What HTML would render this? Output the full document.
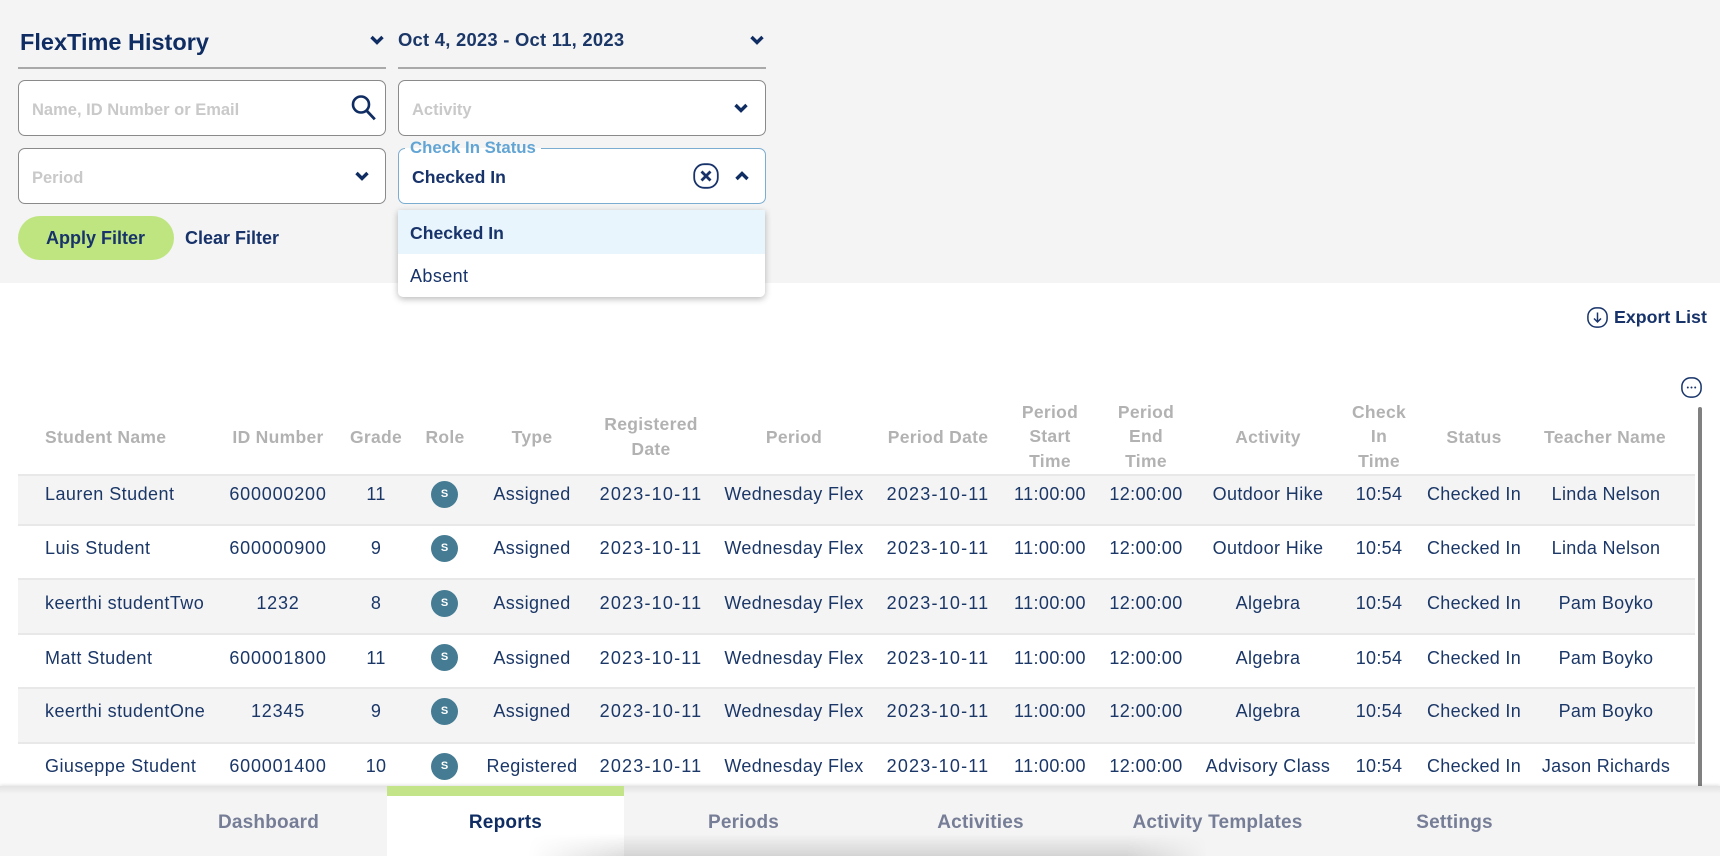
<!DOCTYPE html>
<html><head><meta charset="utf-8"><title>FlexTime History</title>
<style>
*{box-sizing:border-box}
html,body{margin:0;padding:0;width:1720px;height:856px;overflow:hidden;background:#fff;font-family:"Liberation Sans",sans-serif;color:#1b3767}
.a{position:absolute}
.t{position:absolute;white-space:nowrap;line-height:24px;height:24px}
.b{font-weight:bold}
.top{left:0;top:0;width:1720px;height:283px;background:#f4f4f4}
.line{height:2px;background:#a9a9a9;top:67px}
.box{background:#fff;border:1.5px solid #8a8a8a;border-radius:7px;height:56px;width:368.5px}
.ph{font-weight:bold;font-size:16.5px;color:#c9c9c9}
.row{position:absolute;left:17.5px;width:1677.5px;border-top:2px solid #e8e8e8}
.g{background:#f4f4f4}
.c{position:absolute;width:200px;text-align:center;white-space:nowrap;font-size:18px;letter-spacing:.3px;line-height:24px}
.n{text-align:left;letter-spacing:.45px}
.d{letter-spacing:1.2px}
.i{letter-spacing:.8px}
.m{letter-spacing:.4px}
.av{position:absolute;width:27px;height:27px;border-radius:50%;background:#457b93;color:#fff;font-size:11px;font-weight:bold;line-height:27px;text-align:center}
.h{position:absolute;width:200px;text-align:center;font-weight:bold;font-size:17.5px;letter-spacing:.3px;line-height:24.6px;color:#b2b2b2;white-space:nowrap}
.nav{position:absolute;top:811px;width:237px;text-align:center;font-weight:bold;font-size:19px;letter-spacing:.2px;line-height:24px;color:#767d96;white-space:nowrap}
</style></head><body>
<div class="a top"></div>

<div class="t b" style="left:20px;top:30px;font-size:23.5px;color:#0f2d62">FlexTime History</div>
<svg class="a" style="left:370px;top:35px" width="14" height="10" viewBox="0 0 14 10"><path d="M1.5 2l5.5 5.5L12.5 2" fill="none" stroke="#0f2d62" stroke-width="3.4"/></svg>
<div class="t b" style="left:398px;top:28px;font-size:18.4px;letter-spacing:.25px;color:#1b3767">Oct 4, 2023 - Oct 11, 2023</div>
<svg class="a" style="left:750px;top:35px" width="14" height="10" viewBox="0 0 14 10"><path d="M1.5 2l5.5 5.5L12.5 2" fill="none" stroke="#0f2d62" stroke-width="3.4"/></svg>
<div class="a line" style="left:17.5px;width:368.5px"></div>
<div class="a line" style="left:397.5px;width:368.5px"></div>

<div class="a box" style="left:17.5px;top:80px"></div>
<div class="t ph" style="left:32px;top:98px">Name, ID Number or Email</div>
<svg class="a" style="left:350px;top:94px" width="28" height="28" viewBox="0 0 28 28"><circle cx="11" cy="10.5" r="8" fill="none" stroke="#0f2d62" stroke-width="2.6"/><path d="M16.5 16.5l8.3 8.8" fill="none" stroke="#0f2d62" stroke-width="2.8"/></svg>

<div class="a box" style="left:397.5px;top:80px"></div>
<div class="t ph" style="left:412px;top:98px">Activity</div>
<svg class="a" style="left:734px;top:103px" width="14" height="10" viewBox="0 0 14 10"><path d="M1.5 2l5.5 5.5L12.5 2" fill="none" stroke="#0f2d62" stroke-width="3.4"/></svg>

<div class="a box" style="left:17.5px;top:148px"></div>
<div class="t ph" style="left:32px;top:166px">Period</div>
<svg class="a" style="left:355px;top:171px" width="14" height="10" viewBox="0 0 14 10"><path d="M1.5 2l5.5 5.5L12.5 2" fill="none" stroke="#0f2d62" stroke-width="3.4"/></svg>

<div class="a box" style="left:397.5px;top:148px;border-color:#7badd1"></div>
<div class="t b" style="left:405px;top:136px;padding:0 5px;font-size:16.8px;color:#62a5d4;background:linear-gradient(#f4f4f4 50%,#fff 50%)">Check In Status</div>
<div class="t b" style="left:412px;top:165px;font-size:17.6px;color:#17336a">Checked In</div>
<svg class="a" style="left:693px;top:163px" width="26" height="26" viewBox="0 0 26 26"><rect x="1.2" y="1.2" width="23.6" height="23.6" rx="10" fill="none" stroke="#17336a" stroke-width="1.8"/><path d="M8.5 8.5l9 9M17.5 8.5l-9 9" fill="none" stroke="#17336a" stroke-width="2.8"/></svg>
<svg class="a" style="left:735px;top:171px" width="14" height="10" viewBox="0 0 14 10"><path d="M1.5 8l5.5-5.5L12.5 8" fill="none" stroke="#0f2d62" stroke-width="3.4"/></svg>

<div class="a" style="left:17.5px;top:216px;width:156.5px;height:44px;border-radius:22px;background:#bfe580"></div>
<div class="t b" style="left:17px;width:157px;top:226px;text-align:center;font-size:18px;color:#17336a">Apply Filter</div>
<div class="t b" style="left:185px;top:226px;font-size:18px;color:#17336a">Clear Filter</div>

<div class="t b" style="left:1614px;top:305px;font-size:17.8px;color:#17336a">Export List</div>
<svg class="a" style="left:1587px;top:307px" width="21" height="21" viewBox="0 0 21 21"><rect x=".9" y=".9" width="19.2" height="19.2" rx="8.5" fill="none" stroke="#17336a" stroke-width="1.5"/><path d="M10.5 5.5v9M7 11.5l3.5 3.5 3.5-3.5" fill="none" stroke="#17336a" stroke-width="1.5"/></svg>
<svg class="a" style="left:1681px;top:377px" width="21" height="21" viewBox="0 0 21 21"><rect x=".9" y=".9" width="19.2" height="19.2" rx="8.5" fill="none" stroke="#17336a" stroke-width="1.5"/><circle cx="6.8" cy="10.5" r="1" fill="#17336a"/><circle cx="10.5" cy="10.5" r="1" fill="#17336a"/><circle cx="14.2" cy="10.5" r="1" fill="#17336a"/></svg>

<div class="h" style="left:45px;top:424.5px;width:140px;text-align:left">Student Name</div>
<div class="h" style="left:178px;top:424.5px">ID Number</div>
<div class="h" style="left:276px;top:424.5px">Grade</div>
<div class="h" style="left:345px;top:424.5px">Role</div>
<div class="h" style="left:432px;top:424.5px">Type</div>
<div class="h" style="left:551px;top:412px">Registered<br>Date</div>
<div class="h" style="left:694px;top:424.5px">Period</div>
<div class="h" style="left:838px;top:424.5px">Period Date</div>
<div class="h" style="left:950px;top:399.5px">Period<br>Start<br>Time</div>
<div class="h" style="left:1046px;top:399.5px">Period<br>End<br>Time</div>
<div class="h" style="left:1168px;top:424.5px">Activity</div>
<div class="h" style="left:1279px;top:399.5px">Check<br>In<br>Time</div>
<div class="h" style="left:1374px;top:424.5px">Status</div>
<div class="h" style="left:1505px;top:424.5px">Teacher Name</div>

<div class="row g" style="top:474px;height:50px"></div>
<div class="row" style="top:524px;height:54px"></div>
<div class="row g" style="top:578px;height:55px"></div>
<div class="row" style="top:633px;height:54px"></div>
<div class="row g" style="top:687px;height:55px"></div>
<div class="row" style="top:742px;height:44px"></div>

<div class="c n" style="left:45px;top:482px">Lauren Student</div><div class="c i" style="left:178px;top:482px">600000200</div><div class="c" style="left:276px;top:482px">11</div><div class="av" style="left:431px;top:481px">S</div><div class="c m" style="left:432px;top:482px">Assigned</div><div class="c d" style="left:551px;top:482px">2023-10-11</div><div class="c m" style="left:694px;top:482px">Wednesday Flex</div><div class="c d" style="left:838px;top:482px">2023-10-11</div><div class="c m" style="left:950px;top:482px">11:00:00</div><div class="c m" style="left:1046px;top:482px">12:00:00</div><div class="c m" style="left:1168px;top:482px">Outdoor Hike</div><div class="c" style="left:1279px;top:482px">10:54</div><div class="c" style="left:1374px;top:482px">Checked In</div><div class="c" style="left:1506px;top:482px">Linda Nelson</div>

<div class="c n" style="left:45px;top:536px">Luis Student</div><div class="c i" style="left:178px;top:536px">600000900</div><div class="c" style="left:276px;top:536px">9</div><div class="av" style="left:431px;top:535px">S</div><div class="c m" style="left:432px;top:536px">Assigned</div><div class="c d" style="left:551px;top:536px">2023-10-11</div><div class="c m" style="left:694px;top:536px">Wednesday Flex</div><div class="c d" style="left:838px;top:536px">2023-10-11</div><div class="c m" style="left:950px;top:536px">11:00:00</div><div class="c m" style="left:1046px;top:536px">12:00:00</div><div class="c m" style="left:1168px;top:536px">Outdoor Hike</div><div class="c" style="left:1279px;top:536px">10:54</div><div class="c" style="left:1374px;top:536px">Checked In</div><div class="c" style="left:1506px;top:536px">Linda Nelson</div>

<div class="c n" style="left:45px;top:591px">keerthi studentTwo</div><div class="c i" style="left:178px;top:591px">1232</div><div class="c" style="left:276px;top:591px">8</div><div class="av" style="left:431px;top:590px">S</div><div class="c m" style="left:432px;top:591px">Assigned</div><div class="c d" style="left:551px;top:591px">2023-10-11</div><div class="c m" style="left:694px;top:591px">Wednesday Flex</div><div class="c d" style="left:838px;top:591px">2023-10-11</div><div class="c m" style="left:950px;top:591px">11:00:00</div><div class="c m" style="left:1046px;top:591px">12:00:00</div><div class="c m" style="left:1168px;top:591px">Algebra</div><div class="c" style="left:1279px;top:591px">10:54</div><div class="c" style="left:1374px;top:591px">Checked In</div><div class="c" style="left:1506px;top:591px">Pam Boyko</div>

<div class="c n" style="left:45px;top:646px">Matt Student</div><div class="c i" style="left:178px;top:646px">600001800</div><div class="c" style="left:276px;top:646px">11</div><div class="av" style="left:431px;top:644px">S</div><div class="c m" style="left:432px;top:646px">Assigned</div><div class="c d" style="left:551px;top:646px">2023-10-11</div><div class="c m" style="left:694px;top:646px">Wednesday Flex</div><div class="c d" style="left:838px;top:646px">2023-10-11</div><div class="c m" style="left:950px;top:646px">11:00:00</div><div class="c m" style="left:1046px;top:646px">12:00:00</div><div class="c m" style="left:1168px;top:646px">Algebra</div><div class="c" style="left:1279px;top:646px">10:54</div><div class="c" style="left:1374px;top:646px">Checked In</div><div class="c" style="left:1506px;top:646px">Pam Boyko</div>

<div class="c n" style="left:45px;top:699px">keerthi studentOne</div><div class="c i" style="left:178px;top:699px">12345</div><div class="c" style="left:276px;top:699px">9</div><div class="av" style="left:431px;top:698px">S</div><div class="c m" style="left:432px;top:699px">Assigned</div><div class="c d" style="left:551px;top:699px">2023-10-11</div><div class="c m" style="left:694px;top:699px">Wednesday Flex</div><div class="c d" style="left:838px;top:699px">2023-10-11</div><div class="c m" style="left:950px;top:699px">11:00:00</div><div class="c m" style="left:1046px;top:699px">12:00:00</div><div class="c m" style="left:1168px;top:699px">Algebra</div><div class="c" style="left:1279px;top:699px">10:54</div><div class="c" style="left:1374px;top:699px">Checked In</div><div class="c" style="left:1506px;top:699px">Pam Boyko</div>

<div class="c n" style="left:45px;top:754px">Giuseppe Student</div><div class="c i" style="left:178px;top:754px">600001400</div><div class="c" style="left:276px;top:754px">10</div><div class="av" style="left:431px;top:753px">S</div><div class="c m" style="left:432px;top:754px">Registered</div><div class="c d" style="left:551px;top:754px">2023-10-11</div><div class="c m" style="left:694px;top:754px">Wednesday Flex</div><div class="c d" style="left:838px;top:754px">2023-10-11</div><div class="c m" style="left:950px;top:754px">11:00:00</div><div class="c m" style="left:1046px;top:754px">12:00:00</div><div class="c m" style="left:1168px;top:754px">Advisory Class</div><div class="c" style="left:1279px;top:754px">10:54</div><div class="c" style="left:1374px;top:754px">Checked In</div><div class="c" style="left:1506px;top:754px">Jason Richards</div>

<div class="a" style="left:1698px;top:407px;width:4px;height:379px;background:#808080;border-radius:2px 2px 0 0"></div>

<div class="a" style="left:398px;top:210px;width:367px;height:87px;background:#fff;border-radius:0 0 5px 5px;box-shadow:0 2px 7px rgba(0,0,0,.28);overflow:hidden"><div style="height:44px;background:#e9f5fd"></div></div>
<div class="t b" style="left:410px;top:221px;font-size:17.6px;color:#17336a">Checked In</div>
<div class="t" style="left:410px;top:264px;font-size:18px;letter-spacing:.4px;color:#17336a">Absent</div>

<div class="a" style="left:0;top:786px;width:1720px;height:70px;background:#f4f4f4;overflow:hidden;box-shadow:0 -1px 3px rgba(0,0,0,.12)">
  <div class="a" style="left:0;top:0;width:1720px;height:8px;background:linear-gradient(rgba(0,0,0,.07),rgba(0,0,0,0))"></div>
  <div class="a" style="left:387px;top:0;width:237px;height:70px;background:#fff"></div>
  <div class="a" style="left:387px;top:0;width:237px;height:10px;background:#c4e48a"></div>
  <div class="a" style="left:528px;top:48px;width:680px;height:22px;background:linear-gradient(rgba(0,0,0,0),rgba(0,0,0,.13));-webkit-mask-image:linear-gradient(90deg,transparent,#000 14%,#000 88%,transparent);mask-image:linear-gradient(90deg,transparent,#000 14%,#000 88%,transparent)"></div>
</div>
<div class="nav" style="left:150px">Dashboard</div>
<div class="nav" style="left:387px;color:#0f2d62">Reports</div>
<div class="nav" style="left:625px">Periods</div>
<div class="nav" style="left:862px">Activities</div>
<div class="nav" style="left:1099px">Activity Templates</div>
<div class="nav" style="left:1336px">Settings</div>
</body></html>
